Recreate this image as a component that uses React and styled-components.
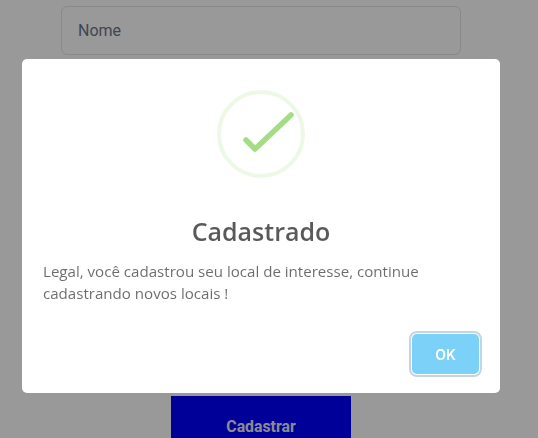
import React from "react";
import styled, { createGlobalStyle } from "styled-components";

const Global = createGlobalStyle`
  html, body { margin: 0; padding: 0; height: 100%; background: #fff; overflow: hidden; }
  #root { height: 100%; }
  * { box-sizing: border-box; }
`;

const Page = styled.div`
  width: 538px;
  height: 438px;
  display: flex;
  flex-direction: column;
  align-items: flex-start;
  padding: 6px 0 0 61px;
  font-family: "Roboto", "Liberation Sans", sans-serif;
  overflow: hidden;
`;

const Field = styled.input`
  width: 400px;
  height: 49px;
  flex: none;
  padding: 0 16px 1px;
  border: 1px solid #e2e4ea;
  border-radius: 6px;
  background: #fff;
  font: 400 16px "Roboto", "Liberation Sans", sans-serif;
  &::placeholder { color: #6c7488; opacity: 1; }
`;

const Submit = styled.button`
  width: 180px;
  height: 60px;
  flex: none;
  margin: 341px 0 0 110px;
  padding: 0;
  border: 0;
  background: #0000ff;
  color: #e8e8f0;
  font: 700 15.800px "Roboto", "Liberation Sans", sans-serif;
`;

const Overlay = styled.div`
  position: fixed;
  inset: 0;
  background: rgba(0, 0, 0, 0.4);
  display: flex;
  align-items: flex-start;
  padding: 59px 0 0 22px;
`;

const Modal = styled.div`
  width: 478px;
  height: 334px;
  background: #fff;
  border-radius: 5px;
  display: flex;
  flex-direction: column;
  font-family: "Open Sans", "Noto Sans", sans-serif;
`;

const IconWrap = styled.div`
  align-self: center;
  margin: 31px 0 0 0;
  width: 88px;
  height: 88px;
  svg { display: block; }
`;

const Title = styled.h2`
  margin: 35px 0 0;
  text-align: center;
  font-size: 25px;
  line-height: 36px;
  font-weight: 600;
  color: rgba(0, 0, 0, 0.65);
`;

const Message = styled.p`
  margin: 11px 0 0;
  padding: 0 20px 0 21px;
  font-size: 15.100px;
  line-height: 22px;
  font-weight: 400;
  color: rgba(0, 0, 0, 0.58);
`;

const Footer = styled.div`
  display: flex;
  justify-content: flex-end;
  padding: 0 21px 0 0;
  margin-top: 30px;
`;

const Ok = styled.button`
  width: 67px;
  height: 40px;
  border: 0;
  border-radius: 5px;
  background: #7cd1f9;
  color: #fff;
  font: 600 14px "Inter", "Roboto", sans-serif;
  box-shadow: 0 0 0 1px #fff, 0 0 0 3px rgba(43, 114, 165, 0.29);
`;

export default function App() {
  return (
    <>
      <Global />
      <Page>
        <Field placeholder="Nome" />
        <Submit>Cadastrar</Submit>
      </Page>
      <Overlay>
        <Modal>
          <IconWrap>
            <svg width="88" height="88" viewBox="0 0 88 88">
              <circle cx="44" cy="44" r="42" fill="none" stroke="#a5dc86" strokeOpacity="0.2" strokeWidth="4" />
              <path d="M29 50 L38 59 L74 25" fill="none" stroke="#a5dc86" strokeWidth="5.500" strokeLinecap="round" strokeLinejoin="round" />
            </svg>
          </IconWrap>
          <Title>Cadastrado</Title>
          <Message>Legal, você cadastrou seu local de interesse, continue cadastrando novos locais !</Message>
          <Footer>
            <Ok>OK</Ok>
          </Footer>
        </Modal>
      </Overlay>
    </>
  );
}
